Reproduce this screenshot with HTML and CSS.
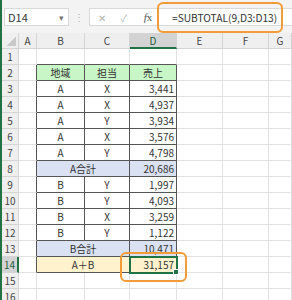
FILE: index.html
```html
<!DOCTYPE html>
<html lang="ja">
<head>
    <meta charset="UTF-8">
    <title>SUBTOTAL</title>
    <link rel="stylesheet" href="styles.css">
</head>
<body>
    <div class="app">
        <div class="toolbar">
            <div class="namebox"><span>D14</span><span class="arrow">▾</span></div>
            <div class="dots">⋮</div>
            <div class="fbar">
                <span class="ico x">✕</span>
                <span class="ico ok">✓</span>
                <span class="ico fx"><i>f</i>x</span>
                <span class="formula">=SUBTOTAL(9,D3:D13)</span>
            </div>
        </div>

        <div class="sheet">
            <div class="corner"></div>
            <div class="ch">A</div><div class="ch">B</div><div class="ch">C</div><div class="ch sel">D</div><div class="ch">E</div><div class="ch">F</div><div class="ch">G</div>

            <div class="rh">1</div><div class="c"></div><div class="c tt"></div><div class="c tt"></div><div class="c tt"></div><div class="c"></div><div class="c"></div><div class="c"></div>

            <div class="rh">2</div><div class="c tl"></div><div class="c t hd">地域</div><div class="c t hd">担当</div><div class="c t hd">売上</div><div class="c"></div><div class="c"></div><div class="c"></div>
            <div class="rh">3</div><div class="c tl"></div><div class="c t">A</div><div class="c t">X</div><div class="c t n">3,441</div><div class="c"></div><div class="c"></div><div class="c"></div>
            <div class="rh">4</div><div class="c tl"></div><div class="c t">A</div><div class="c t">X</div><div class="c t n">4,937</div><div class="c"></div><div class="c"></div><div class="c"></div>
            <div class="rh">5</div><div class="c tl"></div><div class="c t">A</div><div class="c t">Y</div><div class="c t n">3,934</div><div class="c"></div><div class="c"></div><div class="c"></div>
            <div class="rh">6</div><div class="c tl"></div><div class="c t">A</div><div class="c t">X</div><div class="c t n">3,576</div><div class="c"></div><div class="c"></div><div class="c"></div>
            <div class="rh">7</div><div class="c tl"></div><div class="c t">A</div><div class="c t">Y</div><div class="c t n">4,798</div><div class="c"></div><div class="c"></div><div class="c"></div>
            <div class="rh">8</div><div class="c tl"></div><div class="c t m sub">A合計</div><div class="c t n sub">20,686</div><div class="c"></div><div class="c"></div><div class="c"></div>
            <div class="rh">9</div><div class="c tl"></div><div class="c t">B</div><div class="c t">Y</div><div class="c t n">1,997</div><div class="c"></div><div class="c"></div><div class="c"></div>
            <div class="rh">10</div><div class="c tl"></div><div class="c t">B</div><div class="c t">Y</div><div class="c t n">4,093</div><div class="c"></div><div class="c"></div><div class="c"></div>
            <div class="rh">11</div><div class="c tl"></div><div class="c t">B</div><div class="c t">X</div><div class="c t n">3,259</div><div class="c"></div><div class="c"></div><div class="c"></div>
            <div class="rh">12</div><div class="c tl"></div><div class="c t">B</div><div class="c t">Y</div><div class="c t n">1,122</div><div class="c"></div><div class="c"></div><div class="c"></div>
            <div class="rh">13</div><div class="c tl"></div><div class="c t m sub">B合計</div><div class="c t n sub">10,471</div><div class="c"></div><div class="c"></div><div class="c"></div>
            <div class="rh sel">14</div><div class="c tl"></div><div class="c t m tot">A＋B</div><div class="c t n tot act">31,157</div><div class="c"></div><div class="c"></div><div class="c"></div>

            <div class="rh">15</div><div class="c"></div><div class="c"></div><div class="c"></div><div class="c"></div><div class="c"></div><div class="c"></div><div class="c"></div>
            <div class="rh">16</div><div class="c"></div><div class="c"></div><div class="c"></div><div class="c"></div><div class="c"></div><div class="c"></div><div class="c"></div>
        </div>

        <!-- callouts -->
        <div class="mark mark-formula"></div>
        <div class="mark mark-cell"></div>
    </div>
</body>
</html>
```
FILE: styles.css
```css
body {
    margin: 0;
    width: 292px;
    height: 300px;
    overflow: hidden;
    background: #fff;
    font-family: "Noto Sans CJK JP", "Noto Sans", sans-serif;
    color: #333;
}
.app {
    position: relative;
    height: 300px;
    border-left: 2px solid #217346;
}
.toolbar {
    height: 33px;
    box-sizing: border-box;
    padding-top: 8px;
    background: #f3f3f3;
    display: flex;
    align-items: flex-start;
}
.namebox {
    margin-left: 2px;
    width: 65px;
    height: 18px;
    box-sizing: border-box;
    padding: 0 4px 0 3px;
    background: #fff;
    border: 1px solid #d9d9d9;
    display: flex;
    align-items: center;
    justify-content: space-between;
    font-size: 11px;
}
.arrow { font-size: 9px; color: #777; }
.dots {
    width: 20px;
    height: 18px;
    text-align: center;
    line-height: 18px;
    font-size: 10px;
    color: #b0b0b0;
}
.fbar {
    flex: 1;
    height: 18px;
    box-sizing: border-box;
    background: #fff;
    border: 1px solid #d9d9d9;
    border-right: none;
    display: flex;
    align-items: center;
    white-space: nowrap;
}
.ico { text-align: center; font-size: 10px; color: #b5b5b5; }
.x { width: 24px; }
.ok { width: 20px; }
.fx { width: 28px; color: #555; font-family: "Liberation Serif", serif; font-size: 11px; }
.fx i { font-style: italic; }
.formula { padding-left: 10px; font-size: 10.2px; color: #333; }

.sheet {
    display: grid;
    grid-template-columns: 17px 18px 48px 45px 47px 46px 46px 1fr;
    grid-auto-rows: 16px;
    font-size: 10px;
}
.sheet > div {
    box-sizing: border-box;
    line-height: 15px;
    white-space: nowrap;
    overflow: hidden;
}
.corner, .ch, .rh {
    background: #efefef;
    border-right: 1px solid #d4d4d4;
    border-bottom: 1px solid #d4d4d4;
    color: #444;
    text-align: center;
}
.corner {
    background: linear-gradient(135deg, #efefef 55%, #c9c9c9 55%) no-repeat right 2px bottom 2px / 11px 11px, #efefef;
}
.ch.sel {
    background: #d3d3d3;
    border-bottom: 2px solid #217346;
    color: #1e5e3a;
}
.rh.sel {
    background: #d3d3d3;
    border-right: 2px solid #217346;
    color: #1e5e3a;
}
.c {
    border-right: 1px solid #e1e1e1;
    border-bottom: 1px solid #e1e1e1;
    text-align: center;
}
.t {
    border-right-color: #555;
    border-bottom-color: #555;
}
.tl { border-right-color: #555; }
.tt { border-bottom-color: #555; }
.m { grid-column: span 2; }
.n { text-align: right; padding-right: 2px; }
.hd { background: #c9f6c6; }
.sub { background: #d9e1f2; }
.tot { background: #fff2cc; }
.act {
    position: relative;
    overflow: visible !important;
    outline: 2px solid #217346;
    outline-offset: -1px;
}
.act::after {
    content: "";
    position: absolute;
    right: -3px;
    bottom: -3px;
    width: 4px;
    height: 4px;
    background: #217346;
    border: 1px solid #fff;
}

.mark {
    position: absolute;
    box-sizing: border-box;
    border: 2px solid #f39b36;
    border-radius: 6px;
}
.mark-formula { left: 155px; top: 2px; width: 126px; height: 31px; }
.mark-cell { left: 118px; top: 252px; width: 67px; height: 30px; }
```
